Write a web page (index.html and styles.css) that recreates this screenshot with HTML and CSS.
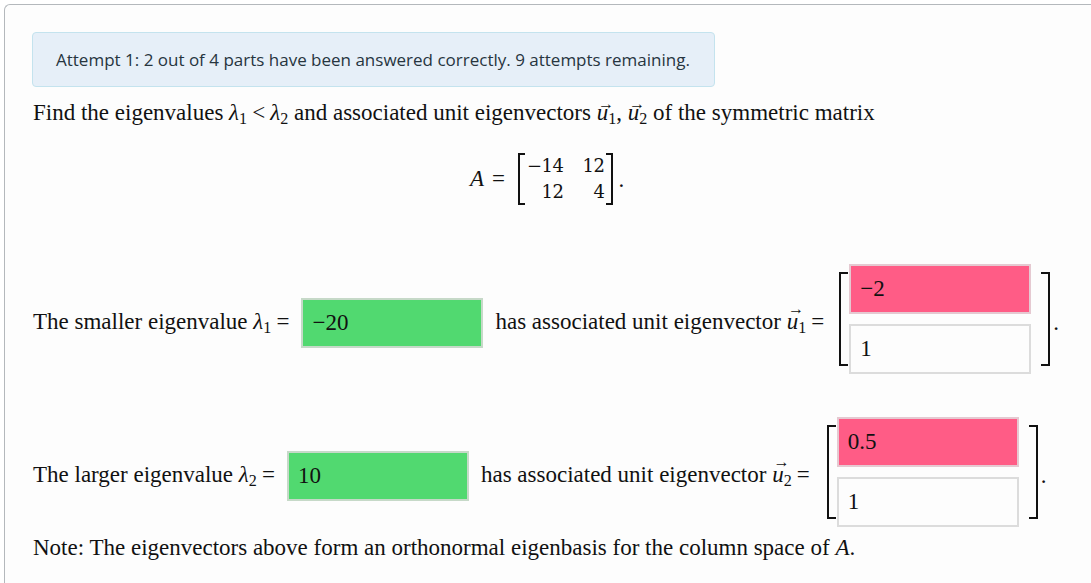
FILE: index.html
```html
<!DOCTYPE html>
<html>
<head>
<meta charset="utf-8">
<link rel="stylesheet" href="styles.css">
</head>
<body>
<div class="card">
  <div class="alert">Attempt 1: 2 out of 4 parts have been answered correctly. 9 attempts remaining.</div>
  <p class="line first">Find the eigenvalues <span class="m"><i>λ</i><sub>1</sub><span class="op">&lt;</span><i>λ</i><sub>2</sub></span> and associated unit eigenvectors <span class="m"><span class="vec"><i>u</i><span class="arr">→</span></span><sub>1</sub>, <span class="vec"><i>u</i><span class="arr">→</span></span><sub>2</sub></span> of the symmetric matrix</p>
  <div class="display">
    <span class="m"><i>A</i><span class="op eq">=</span></span>
    <span class="matrix">
      <span class="br l"></span>
      <span class="cells">
        <span>−14</span><span>12</span>
        <span>12</span><span>4</span>
      </span>
      <span class="br r"></span>
    </span><span class="m dot">.</span>
  </div>
  <div class="row row1">
    <span class="lbl">The smaller eigenvalue <span class="m"><i>λ</i><sub>1</sub><span class="op">=</span></span></span>
    <span class="inp green">−20</span>
    <span class="lbl mid">has associated unit eigenvector <span class="m"><span class="vec"><i>u</i><span class="arr">→</span></span><sub>1</sub><span class="op">=</span></span></span>
    <span class="vector">
      <span class="vbr l"></span>
      <span class="vcol">
        <span class="inp pink">−2</span>
        <span class="inp white">1</span>
      </span>
      <span class="vbr r"></span>
    </span>
    <span class="m vdot">.</span>
  </div>
  <div class="row row2">
    <span class="lbl">The larger eigenvalue <span class="m"><i>λ</i><sub>2</sub><span class="op">=</span></span></span>
    <span class="inp green">10</span>
    <span class="lbl mid">has associated unit eigenvector <span class="m"><span class="vec"><i>u</i><span class="arr">→</span></span><sub>2</sub><span class="op">=</span></span></span>
    <span class="vector">
      <span class="vbr l"></span>
      <span class="vcol">
        <span class="inp pink">0.5</span>
        <span class="inp white">1</span>
      </span>
      <span class="vbr r"></span>
    </span>
    <span class="m vdot">.</span>
  </div>
  <p class="line note">Note: The eigenvectors above form an orthonormal eigenbasis for the column space of <i class="mA">A</i>.</p>
</div>
</body>
</html>
```
FILE: styles.css
```css
html, body { margin: 0; padding: 0; background: #ffffff; }
body { font-family: "Liberation Serif", serif; color: #111; }
.card {
  margin: 4px 0 0 4px;
  border: 1px solid #b4b8bc;
  border-right: none;
  border-radius: 6px 0 0 0;
  background: #fdfdfd;
  padding: 27px 0 30px 28px;
  height: 600px;
  box-sizing: border-box;
}
.alert {
  margin-left: -1px;
  width: 683px;
  height: 55px;
  box-sizing: border-box;
  background: #e6eff8;
  border: 1px solid #c4e3ee;
  border-radius: 4px;
  font-family: "Open Sans", sans-serif;
  font-size: 17px;
  color: #27353f;
  display: flex;
  align-items: center;
  padding-left: 23px;
}
.line { margin: 0; font-size: 23px; line-height: 26px; }
.first { margin-top: 13px; }
.m { font-family: "Liberation Serif", serif; white-space: nowrap; }
.m i, i.mA { font-style: italic; }
.op { margin: 0 0.22em; font-style: normal; }
.op.eq { margin: 0 0.3em 0 0.35em; }
sub { font-size: 0.7em; vertical-align: -0.25em; line-height: 0; }
.vec { position: relative; display: inline-block; }
.arr {
  position: absolute; left: 1px; top: -0.58em;
  font-size: 0.7em; font-style: normal;
}
.display {
  display: flex; align-items: center;
  margin: 27px 0 0 437px; height: 52px; font-size: 23px;
}
.matrix { display: flex; align-items: stretch; height: 52px; margin-left: 6px; }
.br { width: 5px; border: 2px solid #111; }
.br.l { border-right: none; }
.br.r { border-left: none; }
.cells {
  display: grid; grid-template-columns: auto auto; column-gap: 19px;
  padding: 0 2px 0 2px; text-align: right;
  font-family: "DejaVu Serif", serif; font-size: 18px; line-height: 26px;
  letter-spacing: -0.5px;
}
.dot { align-self: flex-end; margin-left: 5px; margin-bottom: 12px; }
.row { display: flex; align-items: center; font-size: 23px; }
.row1 { margin-top: 59px; }
.row2 { margin-top: 43px; }
.lbl { white-space: nowrap; padding-top: 6px; }
.mid { margin-left: 12px; margin-right: 10px; }
.row2 .mid { margin-right: 12px; }
.inp {
  box-sizing: border-box; height: 50px; width: 182px;
  border: 2px solid #cfd6cf; display: flex; align-items: center;
  padding-left: 9px; font-size: 23px;
}
.green { background: #51d970; border-color: #c6d9c8; margin-left: 7px; margin-top: 8px; }
.pink { background: #ff5c86; border-color: #e5c9d1; }
.white { background: #fdfdfd; border-color: #dcdcdc; }
.vector { display: flex; align-items: stretch; }
.vcol { display: flex; flex-direction: column; gap: 10px; margin: 0 10px 0 1px; }
.vbr { width: 7px; border: 2px solid #111; margin: 8px 0; }
.vbr.l { border-right: none; }
.vbr.r { border-left: none; }
.vdot { margin-left: 3px; margin-top: 8px; }
.note { margin-top: 8px; }
```
